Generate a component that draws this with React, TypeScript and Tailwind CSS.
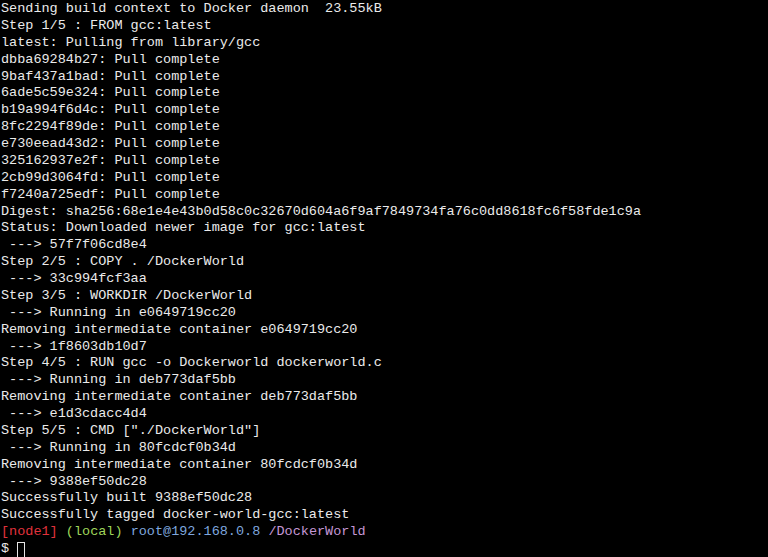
import React from 'react';

const lines: string[] = [
    'Sending build context to Docker daemon  23.55kB',
    'Step 1/5 : FROM gcc:latest',
    'latest: Pulling from library/gcc',
    'dbba69284b27: Pull complete',
    '9baf437a1bad: Pull complete',
    '6ade5c59e324: Pull complete',
    'b19a994f6d4c: Pull complete',
    '8fc2294f89de: Pull complete',
    'e730eead43d2: Pull complete',
    '325162937e2f: Pull complete',
    '2cb99d3064fd: Pull complete',
    'f7240a725edf: Pull complete',
    'Digest: sha256:68e1e4e43b0d58c0c32670d604a6f9af7849734fa76c0dd8618fc6f58fde1c9a',
    'Status: Downloaded newer image for gcc:latest',
    ' ---> 57f7f06cd8e4',
    'Step 2/5 : COPY . /DockerWorld',
    ' ---> 33c994fcf3aa',
    'Step 3/5 : WORKDIR /DockerWorld',
    ' ---> Running in e0649719cc20',
    'Removing intermediate container e0649719cc20',
    ' ---> 1f8603db10d7',
    'Step 4/5 : RUN gcc -o Dockerworld dockerworld.c',
    ' ---> Running in deb773daf5bb',
    'Removing intermediate container deb773daf5bb',
    ' ---> e1d3cdacc4d4',
    'Step 5/5 : CMD ["./DockerWorld"]',
    ' ---> Running in 80fcdcf0b34d',
    'Removing intermediate container 80fcdcf0b34d',
    ' ---> 9388ef50dc28',
    'Successfully built 9388ef50dc28',
    'Successfully tagged docker-world-gcc:latest',
];

export default function App() {
    return (
        <div className="w-[768px] h-[557px] overflow-hidden bg-black text-[#ebebeb] font-['Liberation_Mono','Courier_New',monospace] text-[13.5px] leading-[16.87px] whitespace-pre pl-px pt-px">
            {lines.map((l, i) => (
                <div key={i}>{l}</div>
            ))}
            <div>
                <span className="text-[#e0323c]">[node1]</span>{' '}
                <span className="text-[#9fd65a]">(local)</span>{' '}
                <span className="text-[#7ea6de]">root@192.168.0.8</span>{' '}
                <span className="text-[#c597d6]">/DockerWorld</span>
            </div>
            <div className="flex items-center">
                <span>$ </span>
                <span className="inline-block w-[8px] h-[16px] border border-[#e6e6e6] mt-px" />
            </div>
        </div>
    );
}
